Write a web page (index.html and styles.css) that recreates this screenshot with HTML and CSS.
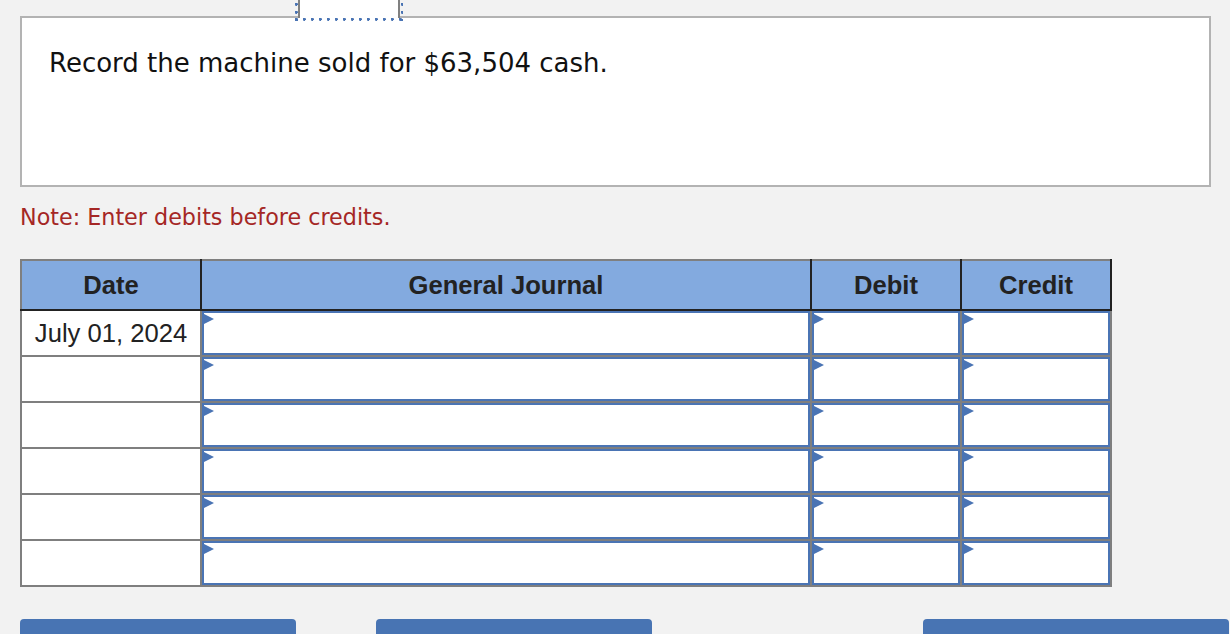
FILE: index.html
```html
<!DOCTYPE html>
<html lang="en">
<head>
<meta charset="utf-8">
<title>Journal entry</title>
<link rel="stylesheet" href="styles.css">
</head>
<body>
<div class="page">
  <div class="tab" aria-hidden="true"></div>
  <div class="question">
    <p class="question-text">Record the machine sold for $63,504 cash.</p>
  </div>
  <p class="note">Note: Enter debits before credits.</p>
  <table class="journal">
    <colgroup>
      <col class="c-date">
      <col class="c-gj">
      <col class="c-amt">
      <col class="c-amt">
    </colgroup>
    <thead>
      <tr>
        <th class="th-first"><div class="th-in">Date</div></th>
        <th><div class="th-in">General Journal</div></th>
        <th><div class="th-in">Debit</div></th>
        <th><div class="th-in">Credit</div></th>
      </tr>
    </thead>
    <tbody>
      <tr>
        <td class="date">July 01, 2024</td>
        <td><div class="field"></div></td>
        <td><div class="field"></div></td>
        <td><div class="field"></div></td>
      </tr>
      <tr>
        <td class="date"></td>
        <td><div class="field"></div></td>
        <td><div class="field"></div></td>
        <td><div class="field"></div></td>
      </tr>
      <tr>
        <td class="date"></td>
        <td><div class="field"></div></td>
        <td><div class="field"></div></td>
        <td><div class="field"></div></td>
      </tr>
      <tr>
        <td class="date"></td>
        <td><div class="field"></div></td>
        <td><div class="field"></div></td>
        <td><div class="field"></div></td>
      </tr>
      <tr>
        <td class="date"></td>
        <td><div class="field"></div></td>
        <td><div class="field"></div></td>
        <td><div class="field"></div></td>
      </tr>
      <tr>
        <td class="date"></td>
        <td><div class="field"></div></td>
        <td><div class="field"></div></td>
        <td><div class="field"></div></td>
      </tr>
    </tbody>
  </table>
  <div class="actions">
    <button class="btn btn-1" type="button"></button>
    <button class="btn btn-2" type="button"></button>
    <button class="btn btn-3" type="button"></button>
  </div>
</div>
</body>
</html>
```
FILE: styles.css
```css
html, body {
  margin: 0;
  padding: 0;
  background: #f2f2f2;
  overflow: hidden;
}

.page {
  position: relative;
  padding: 16px 19px 0 20px;
}

/* focused tab peeking above the question box */
.tab {
  position: absolute;
  left: 298px;
  top: -10px;
  width: 102px;
  height: 28px;
  box-sizing: border-box;
  background: #fff;
  border-left: 2px solid #808080;
  border-right: 2px solid #808080;
  z-index: 2;
}

.tab::after {
  content: "";
  position: absolute;
  left: -5px;
  right: -5px;
  top: 0;
  bottom: -3px;
  background:
    radial-gradient(circle at 1.25px 1.25px, #4a74b4 0, #4a74b4 1.3px, transparent 1.8px) left 0 bottom 0 / 8px 3px repeat-x,
    radial-gradient(circle at 1.25px 1.25px, #4a74b4 0, #4a74b4 1.3px, transparent 1.8px) left 0 top 5px / 3px 8px repeat-y,
    radial-gradient(circle at 1.25px 1.25px, #4a74b4 0, #4a74b4 1.3px, transparent 1.8px) right -1px top 5px / 3px 8px repeat-y;
}

.question {
  box-sizing: border-box;
  width: 1191px;
  height: 171px;
  background: #fff;
  border: 2px solid #b3b3b3;
  padding: 30px 27px 0 27px;
}

.question-text {
  margin: 0;
  font-family: "DejaVu Sans", Verdana, sans-serif;
  font-size: 26px;
  line-height: 30px;
  color: #111;
}

.note {
  margin: 17px 0 0 0;
  font-family: "DejaVu Sans", Verdana, sans-serif;
  font-size: 22.25px;
  line-height: 26px;
  color: #a52725;
}

.journal {
  margin-top: 29px;
  border-collapse: collapse;
  table-layout: fixed;
  width: 1092px;
  font-family: "Liberation Sans", Arial, sans-serif;
  font-size: 25.6px;
  color: #222;
}

.c-date { width: 180px; }
.c-gj { width: 610px; }
.c-amt { width: 150px; }

.journal th {
  padding: 0;
  background: #83aadf;
  border: 2px solid #222;
  border-top-color: #7f7f7f;
  font-weight: bold;
}

.journal th.th-first {
  border-left-color: #7f7f7f;
}

.th-in {
  height: 48px;
  display: flex;
  align-items: center;
  justify-content: center;
}

.journal td {
  padding: 0;
  border: 2px solid #7f7f7f;
  background: #fff;
  vertical-align: top;
}

.journal td.date {
  vertical-align: middle;
  text-align: center;
  height: 44px;
}

.field {
  position: relative;
  box-sizing: border-box;
  height: 44px;
  border: 2px solid #4a74b4;
  background: #fff;
}

.field::before {
  content: "";
  position: absolute;
  top: 0;
  left: -2px;
  width: 0;
  height: 0;
  border-left: 12px solid #4a74b4;
  border-top: 6px solid transparent;
  border-bottom: 6px solid transparent;
}

.actions {
  display: flex;
  margin-top: 32px;
}

.btn {
  height: 15px;
  padding: 0;
  border: none;
  border-radius: 4px 4px 0 0;
  background: #4874b3;
  flex: none;
}

.btn-1 { width: 276px; }
.btn-2 { width: 276px; margin-left: 80px; }
.btn-3 { width: 306px; margin-left: 271px; }
```
